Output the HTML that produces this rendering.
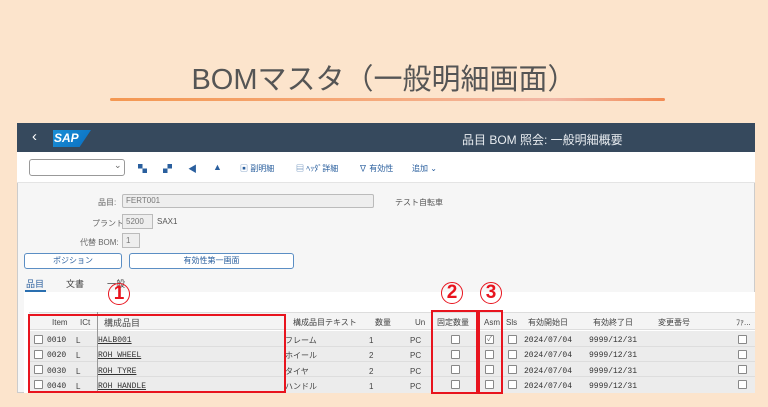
<!DOCTYPE html>
<html><head><meta charset="utf-8"><style>
*{margin:0;padding:0;box-sizing:border-box}
body{width:768px;height:407px;background:#fce4cc;position:relative;overflow:hidden;font-family:"Liberation Sans","Noto Sans CJK JP",sans-serif;color:#333}
.a{position:absolute;white-space:nowrap}
.t{font-size:8px;color:#444}
.cb{position:absolute;width:9px;height:9px;border:1px solid #888;background:#fff;border-radius:1px}
.red{position:absolute;border:2px solid #e8141e}
.num{position:absolute;color:#e8141e;font-size:19px;font-weight:bold;width:22px;height:22px;border:1.5px solid #e8141e;border-radius:50%;text-align:center;line-height:20px;font-family:"Liberation Sans",sans-serif}
.mono{font-family:"Liberation Mono",monospace;font-size:8px;color:#333}
</style></head><body>
<div class="a" style="left:0;width:768px;top:56px;text-align:center;font-size:29px;color:#555;font-family:'Liberation Sans','Noto Sans CJK JP',sans-serif">BOMマスタ（一般明細画面）</div>
<div class="a" style="left:110px;top:98px;width:555px;height:3px;background:linear-gradient(90deg,#f28a3c,#f4a070 50%,#efb0a0 80%,#f07a3c);border-radius:2px;opacity:.85"></div>
<div class="a" style="left:17px;top:123px;width:738px;height:270px;background:#f6f6f6;border:1px solid #ccc"></div>
<div class="a" style="left:17px;top:123px;width:738px;height:29px;background:#36495d"></div>
<div class="a" style="left:32px;top:128px;color:#fff;font-size:15px">‹</div>
<div class="a" style="left:53px;top:130px;width:38px;height:17px;background:linear-gradient(135deg,#1a8fd6,#0a6fc2);clip-path:polygon(0 0,100% 0,70% 100%,0 100%)"></div>
<div class="a" style="left:54px;top:131px;color:#fff;font-size:12px;font-weight:bold;font-style:italic">SAP</div>
<div class="a" style="left:462px;top:131px;color:#e8ecf0;font-size:12px">品目 BOM 照会: 一般明細概要</div>
<div class="a" style="left:17px;top:152px;width:738px;height:31px;background:#fff;border-bottom:1px solid #e4e4e4"></div>
<div class="a" style="left:29px;top:159px;width:96px;height:17px;border:1px solid #999;border-radius:3px;background:#fff"></div>
<div class="a" style="left:114px;top:160px;font-size:9px;color:#666">⌄</div>
<div class="a t" style="left:138px;top:162px;color:#2a5f9e;font-size:9px">▚</div>
<div class="a t" style="left:163px;top:162px;color:#2a5f9e;font-size:9px">▞</div>
<div class="a t" style="left:188px;top:162px;color:#2a5f9e;font-size:9px">◀</div>
<div class="a t" style="left:213px;top:162px;color:#2a5f9e;font-size:9px">▲</div>
<div class="a t" style="left:240px;top:163px;color:#2a5f9e">▣ 副明細</div>
<div class="a t" style="left:296px;top:163px;color:#2a5f9e">▤ ﾍｯﾀﾞ詳細</div>
<div class="a t" style="left:359px;top:163px;color:#2a5f9e">∇ 有効性</div>
<div class="a t" style="left:412px;top:163px;color:#2a5f9e">追加 ⌄</div>
<div class="a t" style="left:98px;top:197px;color:#666">品目:</div>
<div class="a" style="left:122px;top:194px;width:252px;height:14px;border:1px solid #bbb;background:#eee;border-radius:2px"></div>
<div class="a t" style="left:126px;top:196px;color:#777">FERT001</div>
<div class="a t" style="left:395px;top:197px;color:#555">テスト自転車</div>
<div class="a t" style="left:92px;top:218px;color:#666">プラント:</div>
<div class="a" style="left:122px;top:214px;width:31px;height:15px;border:1px solid #bbb;background:#eee"></div>
<div class="a t" style="left:126px;top:217px;color:#777">5200</div>
<div class="a t" style="left:157px;top:217px;color:#555">SAX1</div>
<div class="a t" style="left:80px;top:237px;color:#666">代替 BOM:</div>
<div class="a" style="left:122px;top:233px;width:18px;height:15px;border:1px solid #bbb;background:#eee"></div>
<div class="a t" style="left:126px;top:236px;color:#777">1</div>
<div class="a" style="left:24px;top:253px;width:98px;height:16px;border:1px solid #5b8ec4;border-radius:3px;background:#fff;font-size:8px;color:#2a5f9e;text-align:center;line-height:14px">ポジション</div>
<div class="a" style="left:129px;top:253px;width:165px;height:16px;border:1px solid #5b8ec4;border-radius:3px;background:#fff;font-size:8px;color:#2a5f9e;text-align:center;line-height:14px">有効性第一画面</div>
<div class="a" style="left:26px;top:277px;font-size:9px;color:#2a5f9e">品目</div>
<div class="a" style="left:25px;top:290px;width:21px;height:2px;background:#2a6fb0"></div>
<div class="a" style="left:66px;top:277px;font-size:9px;color:#444">文書</div>
<div class="a" style="left:107px;top:277px;font-size:9px;color:#444">一般</div>
<div class="a" style="left:24px;top:292px;width:731px;height:101px;background:#fff"></div>
<div class="a" style="left:29px;top:312px;width:726px;height:18px;background:#f4f4f4;border-top:1px solid #ddd;border-bottom:1px solid #ddd"></div>
<div class="a" style="left:29px;top:331px;width:726px;height:62px;background:#ececec"></div>
<div class="a" style="left:29px;top:346px;width:726px;height:1px;background:#ddd"></div>
<div class="a" style="left:29px;top:361px;width:726px;height:1px;background:#ddd"></div>
<div class="a" style="left:29px;top:376px;width:726px;height:1px;background:#ddd"></div>
<div class="a" style="left:97px;top:312px;width:1px;height:81px;background:#999"></div>
<div class="a t" style="left:52px;top:318px">Item</div>
<div class="a t" style="left:80px;top:318px">ICt</div>
<div class="a" style="left:104px;top:316px;font-size:9px;color:#444">構成品目</div>
<div class="a t" style="left:293px;top:317px">構成品目テキスト</div>
<div class="a t" style="left:375px;top:317px">数量</div>
<div class="a t" style="left:415px;top:318px">Un</div>
<div class="a t" style="left:437px;top:317px">固定数量</div>
<div class="a t" style="left:484px;top:318px">Asm</div>
<div class="a t" style="left:506px;top:318px">Sls</div>
<div class="a t" style="left:528px;top:317px">有効開始日</div>
<div class="a t" style="left:593px;top:317px">有効終了日</div>
<div class="a t" style="left:658px;top:317px">変更番号</div>
<div class="a t" style="left:736px;top:317px">ﾌｧ...</div>
<div class="cb" style="left:34px;top:335px"></div><div class="cb" style="left:34px;top:350px"></div><div class="cb" style="left:34px;top:365px"></div><div class="cb" style="left:34px;top:380px"></div>
<div class="a mono" style="left:47px;top:333px;line-height:15.3px">0010<br>0020<br>0030<br>0040</div>
<div class="a t" style="left:76px;top:333px;line-height:15.3px">L<br>L<br>L<br>L</div>
<div class="a mono" style="left:98px;top:333px;line-height:15.3px;text-decoration:underline">HALB001<br>ROH WHEEL<br>ROH TYRE<br>ROH HANDLE</div>
<div class="a t" style="left:285px;top:333px;line-height:15.3px">フレーム<br>ホイール<br>タイヤ<br>ハンドル</div>
<div class="a t" style="left:369px;top:333px;line-height:15.3px">1<br>2<br>2<br>1</div>
<div class="a t" style="left:410px;top:333px;line-height:15.3px">PC<br>PC<br>PC<br>PC</div>
<div class="cb" style="left:451px;top:335px"></div><div class="cb" style="left:451px;top:350px"></div><div class="cb" style="left:451px;top:365px"></div><div class="cb" style="left:451px;top:380px"></div>
<div class="cb" style="left:485px;top:335px;font-size:7px;line-height:7px;text-align:center;color:#666">✓</div><div class="cb" style="left:485px;top:350px"></div><div class="cb" style="left:485px;top:365px"></div><div class="cb" style="left:485px;top:380px"></div>
<div class="cb" style="left:508px;top:335px"></div><div class="cb" style="left:508px;top:350px"></div><div class="cb" style="left:508px;top:365px"></div><div class="cb" style="left:508px;top:380px"></div>
<div class="a mono" style="left:524px;top:333px;line-height:15.3px">2024/07/04<br>2024/07/04<br>2024/07/04<br>2024/07/04</div>
<div class="a mono" style="left:589px;top:333px;line-height:15.3px">9999/12/31<br>9999/12/31<br>9999/12/31<br>9999/12/31</div>
<div class="cb" style="left:738px;top:335px"></div><div class="cb" style="left:738px;top:350px"></div><div class="cb" style="left:738px;top:365px"></div><div class="cb" style="left:738px;top:380px"></div>
<div class="red" style="left:28px;top:314px;width:258px;height:79px"></div>
<div class="red" style="left:431px;top:310px;width:47px;height:84px"></div>
<div class="red" style="left:478px;top:310px;width:25px;height:84px"></div>
<div class="num" style="left:108px;top:283px">1</div>
<div class="num" style="left:441px;top:282px">2</div>
<div class="num" style="left:480px;top:282px">3</div>
</body></html>
